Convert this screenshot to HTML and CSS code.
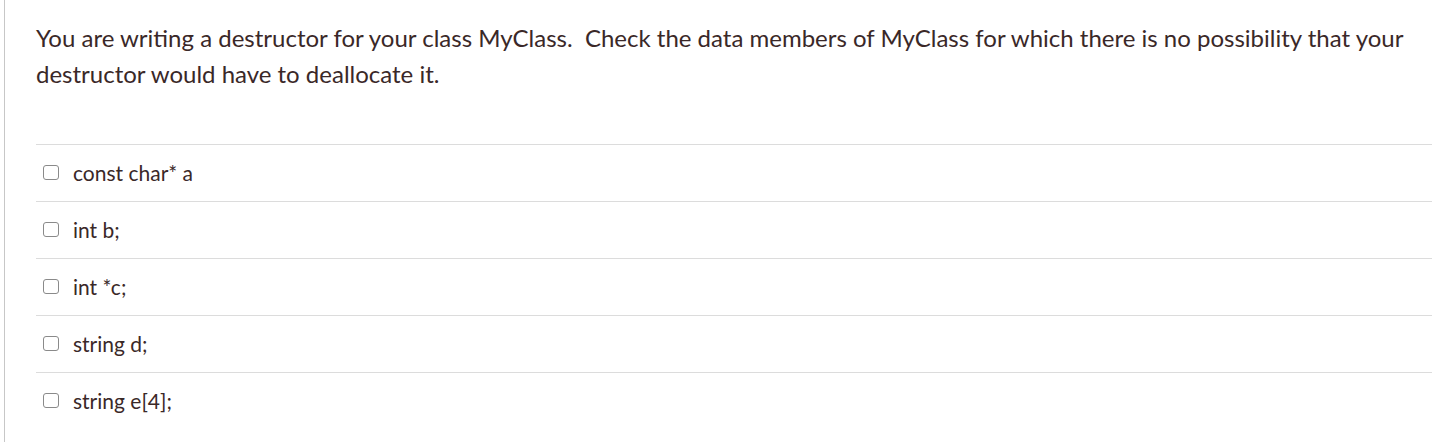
FILE: index.html
```html
<!DOCTYPE html>
<html>
<head>
<meta charset="utf-8">
<link rel="stylesheet" href="styles.css">
</head>
<body>
<div class="page">
  <div class="question">
    <p class="prompt">You are writing a destructor for your class MyClass.&nbsp; Check the data members of MyClass for which there is no possibility that your destructor would have to deallocate it.</p>
    <div class="answers">
      <label class="answer"><span class="box"></span><span class="text">const char* a</span></label>
      <label class="answer"><span class="box"></span><span class="text">int b;</span></label>
      <label class="answer"><span class="box"></span><span class="text">int *c;</span></label>
      <label class="answer"><span class="box"></span><span class="text">string d;</span></label>
      <label class="answer"><span class="box"></span><span class="text">string e[4];</span></label>
    </div>
  </div>
</div>
</body>
</html>
```
FILE: styles.css
```css
html, body {
  margin: 0;
  padding: 0;
  background: #ffffff;
}
body {
  font-family: Lato, "Open Sans", sans-serif;
  color: #3a2828;
}
.page {
  padding-left: 4px;
  height: 442px;
  box-sizing: border-box;
}
.question {
  border-left: 1px solid #c7c7c7;
  height: 100%;
  padding: 20px 8px 0 31px;
  box-sizing: border-box;
}
.prompt {
  margin: 0;
  font-size: 24px;
  line-height: 36px;
  width: 1385px;
}
.answers {
  margin-top: 52px;
  display: flex;
  flex-direction: column;
}
.answer {
  display: flex;
  align-items: center;
  height: 57px;
  border-top: 1px solid #dcdcdc;
  box-sizing: border-box;
  padding-left: 7px;
  padding-bottom: 1px;
  font-size: 21px;
}
.box {
  width: 16px;
  height: 15px;
  border: 1px solid #8a8a8a;
  border-radius: 3px;
  box-sizing: border-box;
  margin-right: 14px;
  flex: none;
}
```
